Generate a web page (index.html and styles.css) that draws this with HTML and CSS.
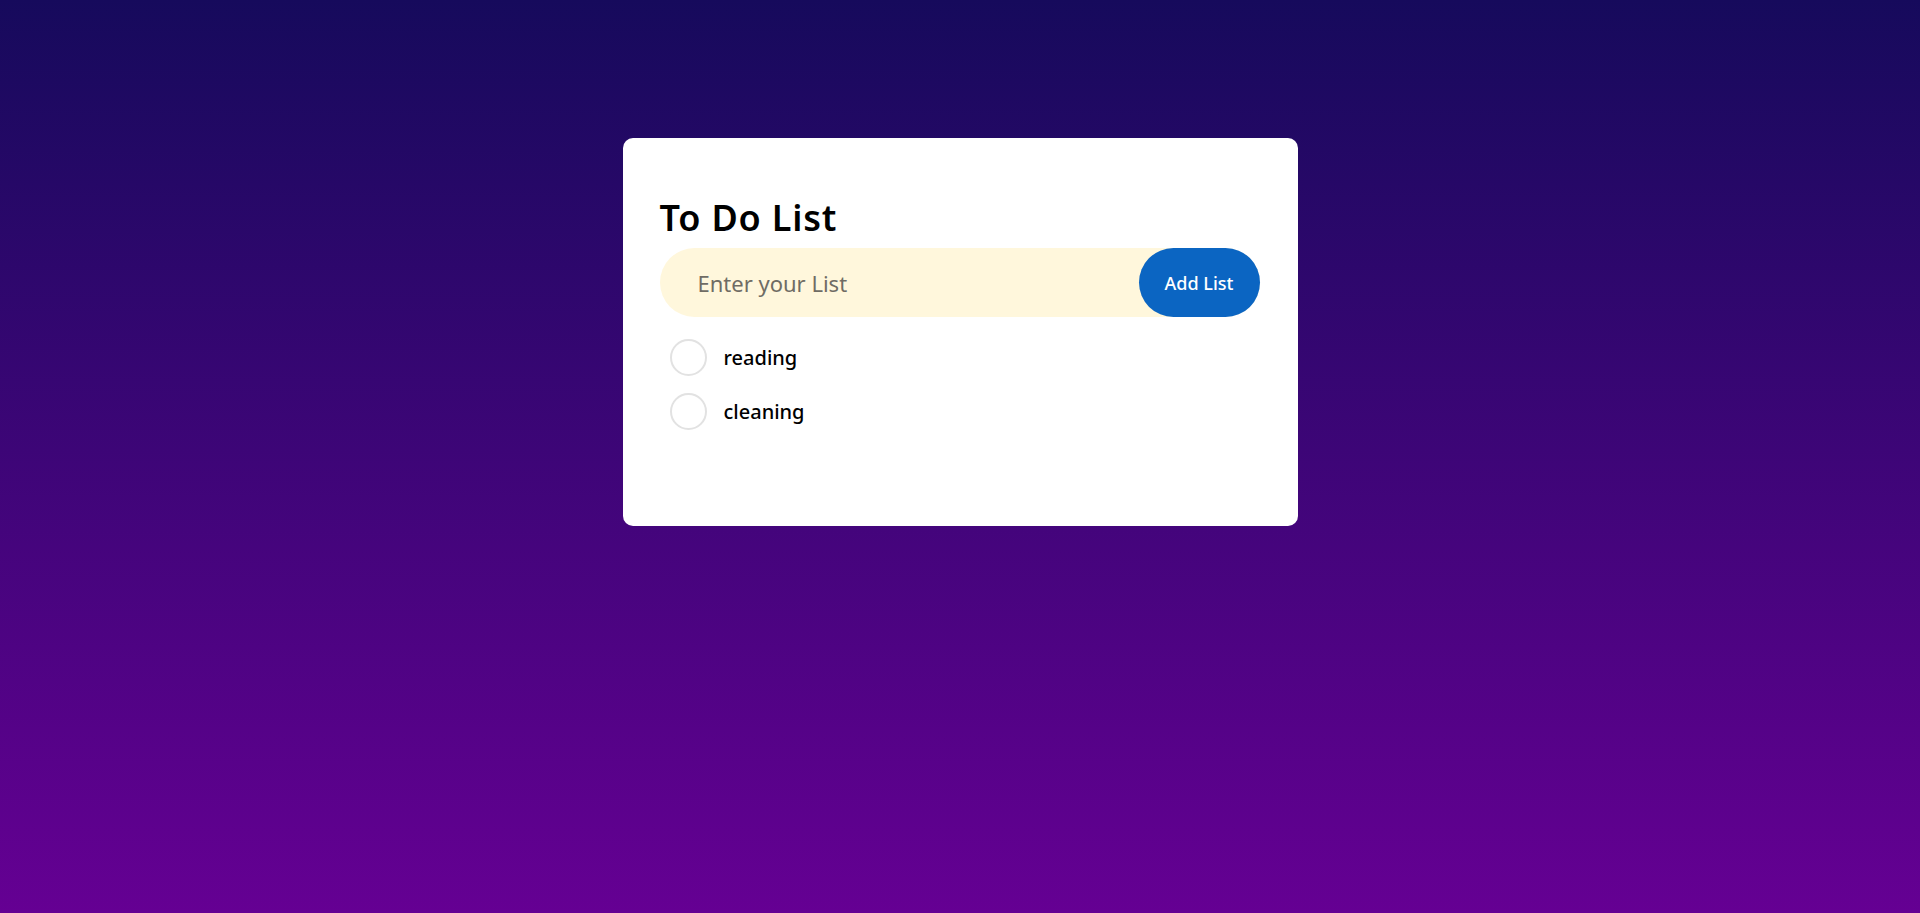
FILE: index.html
```html
<!DOCTYPE html>
<html lang="en">
<head>
    <meta charset="UTF-8">
    <meta name="viewport" content="width=device-width, initial-scale=1.0">
    <title>To Do List</title>
    <link rel="stylesheet" href="styles.css">
</head>
<body>
    <div class="todo-app">
        <h2>To Do List</h2>
        <div class="row">
            <input type="text" id="input-box" placeholder="Enter your List">
            <button>Add List</button>
        </div>
        <ul id="list-container">
            <li>reading</li>
            <li>cleaning</li>
        </ul>
    </div>
</body>
</html>
```

FILE: styles.css
```css
* {
    margin: 0;
    padding: 0;
    box-sizing: border-box;
}

body {
    font-family: "Noto Sans", sans-serif;
    min-height: 100vh;
    background: linear-gradient(#160a5c, #650093); /* Dark blue to purple */
    padding-top: 138px;
}

.todo-app {
    width: 675px;
    margin: 0 auto;
    background: #ffffff;
    padding: 60px 38px 88px 37px;
    border-radius: 10px;
}

.todo-app h2 {
    color: #000000;
    font-size: 36px;
    font-weight: 600;
    line-height: 40px;
    letter-spacing: 0.8px;
    margin-bottom: 10px;
}

.row {
    display: flex;
    align-items: center;
    height: 69px;
    background: #fff7dc; /* Light cream */
    border-radius: 35px;
}

.row input {
    flex: 1;
    height: 100%;
    border: none;
    outline: none;
    background: transparent;
    padding-left: 38px;
    font-family: inherit;
    font-size: 22px;
    color: #333333;
}

.row input::placeholder {
    color: #6f6c64;
}

.row button {
    width: 121px;
    height: 69px;
    border: none;
    outline: none;
    border-radius: 35px;
    background: #0b65c2;
    color: #ffffff;
    font-family: inherit;
    font-size: 18px;
    font-weight: 500;
    cursor: pointer;
}

ul {
    margin-top: 13px;
}

ul li {
    list-style: none;
    display: flex;
    align-items: center;
    gap: 17px;
    height: 54px;
    padding-left: 10px;
    font-size: 20px;
    font-weight: 500;
    color: #000000;
    cursor: pointer;
    user-select: none;
}

ul li::before {
    content: '';
    flex: none;
    width: 33px;
    height: 33px;
    border: 2.5px solid #e2e2e2;
    border-radius: 50%;
}
```
